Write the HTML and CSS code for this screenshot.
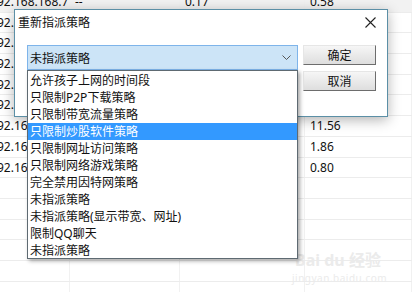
FILE: index.html
```html
<!DOCTYPE html>
<html lang="zh-CN">
<head>
  <meta charset="UTF-8" />
  <title>重新指派策略</title>
  <link rel="stylesheet" href="styles.css">
</head>
<body>

<!-- Tabela de fundo -->
<div class="grade">
  <div class="linha topo"><span>92.168.168.7</span><span>--</span><span>0.17</span><span>0.58</span></div>
  <div class="linha"><span>92.168.168.2</span><span></span><span></span><span></span></div>
  <div class="linha"><span>92.168.168.3</span><span></span><span></span><span></span></div>
  <div class="linha"><span>92.168.168.4</span><span></span><span></span><span></span></div>
  <div class="linha"><span>92.168.168.5</span><span></span><span></span><span></span></div>
  <div class="linha"><span>92.168.168.6</span><span></span><span></span><span></span></div>
  <div class="linha"><span>92.168.168.8</span><span></span><span></span><span>11.56</span></div>
  <div class="linha"><span>92.168.168.9</span><span></span><span></span><span>1.86</span></div>
  <div class="linha"><span>92.168.168.10</span><span></span><span></span><span>0.80</span></div>
  <div class="linha"><span></span><span></span><span></span><span></span></div>
  <div class="linha"><span></span><span></span><span></span><span></span></div>
  <div class="linha"><span></span><span></span><span></span><span></span></div>
  <div class="linha"><span></span><span></span><span></span><span></span></div>
  <div class="linha"><span></span><span></span><span></span><span></span></div>
  <div class="linha"><span></span><span></span><span></span><span></span></div>
</div>

<div class="marca">
  <div class="marca-logo">Bai du 经验</div>
  <div class="marca-url">jingyan.baidu.com</div>
</div>

<!-- Janela de diálogo -->
<div class="dialogo">
  <div class="titulo">
    <span>重新指派策略</span>
    <svg class="fechar" width="11" height="11" viewBox="0 0 11 11">
      <path d="M0.5 0.5 L10.5 10.5 M10.5 0.5 L0.5 10.5" stroke="#222" stroke-width="1.1" fill="none"/>
    </svg>
  </div>
  <div class="corpo">
    <div class="combo">
      <div class="combo-caixa">
        <span>未指派策略</span>
        <svg width="9" height="5" viewBox="0 0 9 5">
          <path d="M0.5 0.5 L4.5 4.5 L8.5 0.5" stroke="#555" stroke-width="1" fill="none"/>
        </svg>
      </div>
      <ul class="lista">
        <li>允许孩子上网的时间段</li>
        <li>只限制P2P下载策略</li>
        <li>只限制带宽流量策略</li>
        <li class="ativo">只限制炒股软件策略</li>
        <li>只限制网址访问策略</li>
        <li>只限制网络游戏策略</li>
        <li>完全禁用因特网策略</li>
        <li>未指派策略</li>
        <li>未指派策略(显示带宽、网址)</li>
        <li>限制QQ聊天</li>
        <li>未指派策略</li>
      </ul>
    </div>
    <div class="botoes">
      <button>确定</button>
      <button>取消</button>
    </div>
  </div>
</div>

</body>
</html>
```

FILE: styles.css
```css
body {
  margin: 0;
  width: 412px;
  height: 292px;
  overflow: hidden;
  background-color: white;
  font-family: "Noto Sans", "Noto Sans CJK SC", sans-serif;
  font-size: 12px;
  color: #111;
}

/* Tabela de fundo */
.grade {
  margin-top: -8px;
  margin-left: -3px;
}
.linha {
  display: grid;
  grid-template-columns: 73px 110px 125px 1fr;
  height: 20.7px;
  box-sizing: border-box;
  border-bottom: 1px solid #ececec;
}
.linha span {
  line-height: 20px;
  white-space: nowrap;
  overflow: hidden;
  border-right: 1px solid #f1f1f1;
}
.linha span + span {
  padding-left: 5px;
}
.linha.topo {
  background-color: #f2f2f2;
}

/* Marca d'água */
.marca {
  position: absolute;
  left: 292px;
  top: 247px;
  width: 92px;
  color: #ebebeb;
  text-align: center;
}
.marca-logo {
  font-size: 16px;
  font-weight: bold;
}
.marca-url {
  font-size: 10px;
  letter-spacing: 0.5px;
}

/* Diálogo */
.dialogo {
  position: absolute;
  left: 14px;
  top: 9px;
  width: 374px;
  height: 108px;
  box-sizing: border-box;
  background-color: white;
  border: 1px solid #5b8fa6;
  box-shadow: 0 3px 12px rgba(0,0,0,0.3);
}
.titulo {
  height: 24px;
  display: flex;
  align-items: center;
  justify-content: space-between;
  padding: 0 11px 0 3px;
}
.corpo {
  display: flex;
  gap: 5px;
  padding: 11px 0 0 12px;
}

/* Combo */
.combo {
  position: relative;
  width: 271px;
}
.combo-caixa {
  height: 25px;
  box-sizing: border-box;
  display: flex;
  align-items: center;
  justify-content: space-between;
  padding: 0 6px 0 2px;
  background-color: #cce4f7;
  border: 1px solid #7eb4ea;
}
.lista {
  position: absolute;
  left: 0;
  top: 25px;
  width: 271px;
  margin: 0;
  padding: 1px 0 0;
  list-style: none;
  box-sizing: border-box;
  height: 189px;
  background-color: white;
  border: 1px solid #5e6a72;
  box-shadow: 2px 2px 4px rgba(0,0,0,0.35);
}
.lista li {
  height: 17px;
  line-height: 17px;
  padding-left: 2px;
  white-space: nowrap;
}
.lista li.ativo {
  background-color: #3399ff;
  color: white;
}

/* Botões */
.botoes {
  display: flex;
  flex-direction: column;
  gap: 6px;
}
.botoes button {
  width: 73px;
  height: 20px;
  padding: 0;
  font-family: inherit;
  font-size: 12px;
  color: #111;
  background: linear-gradient(#f6f6f6, #dedede);
  border: 1px solid;
  border-color: #e6e6e6 #6d6d6d #6d6d6d #e6e6e6;
}
```
